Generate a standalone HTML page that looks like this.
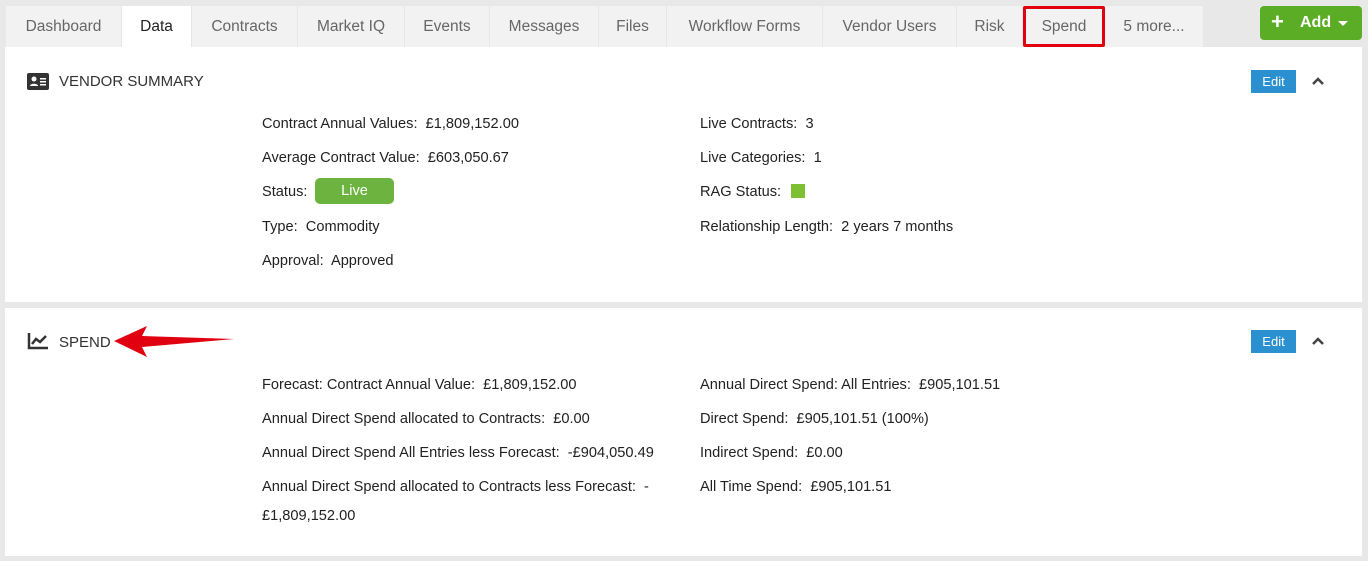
<!DOCTYPE html>
<html><head><style>
*{box-sizing:border-box;margin:0;padding:0}
body{width:1368px;height:561px;background:#e8e8e8;font-family:"Liberation Sans",sans-serif;font-size:14.6px;color:#222;position:relative;overflow:hidden}
.tab{position:absolute;top:6px;height:41px;background:#f2f2f2;color:#666;font-size:15.5px;line-height:41px;text-align:center;border-right:1px solid #e6e6e6}
.tab.active{background:#fff;color:#222}
.panel{position:absolute;left:5px;width:1357px;background:#fff}
.t{position:absolute;white-space:nowrap}
.h{position:absolute;font-size:15px;color:#333;white-space:nowrap}
.edit{position:absolute;width:45px;height:23px;background:#2b90d0;color:#fff;font-size:13px;line-height:23px;text-align:center}
.chev{position:absolute}
</style></head><body>
<div class="tab" style="left:6px;width:116px">Dashboard</div>
<div class="tab active" style="left:122px;width:70px">Data</div>
<div class="tab" style="left:192px;width:106px">Contracts</div>
<div class="tab" style="left:298px;width:107px">Market IQ</div>
<div class="tab" style="left:405px;width:85px">Events</div>
<div class="tab" style="left:490px;width:109px">Messages</div>
<div class="tab" style="left:599px;width:68px">Files</div>
<div class="tab" style="left:667px;width:156px">Workflow Forms</div>
<div class="tab" style="left:823px;width:134px">Vendor Users</div>
<div class="tab" style="left:957px;width:66px">Risk</div>
<div class="tab" style="left:1023px;width:82px;border:3px solid #e00010;border-radius:2px;line-height:35px">Spend</div>
<div class="tab" style="left:1105px;width:99px">5 more...</div>
<div style="position:absolute;left:1260px;top:6px;width:102px;height:34px;background:#5cad26;border-radius:4px;color:#fff;font-size:16px;font-weight:bold;line-height:34px">
<span style="position:absolute;left:11px;font-size:22px;top:-1px">+</span><span style="position:absolute;left:40px">Add</span>
<span style="position:absolute;left:78px;top:15px;border-left:5px solid transparent;border-right:5px solid transparent;border-top:5px solid #fff"></span></div>

<div class="panel" style="top:47px;height:255px">
<svg style="position:absolute;left:22px;top:26px" width="22" height="17" viewBox="0 0 22 17"><rect width="22" height="17" rx="2" fill="#333"/><circle cx="7" cy="6" r="2.5" fill="#fff"/><path d="M3 13c0-3 8-3 8 0z" fill="#fff"/><rect x="13" y="5" width="6" height="1.5" fill="#fff"/><rect x="13" y="8" width="6" height="1.5" fill="#fff"/><rect x="13" y="11" width="6" height="1.5" fill="#fff"/></svg>
<div class="h" style="left:54px;top:26px">VENDOR SUMMARY</div>
<div class="edit" style="top:23px;left:1246px">Edit</div>
<svg class="chev" style="top:29px;left:1306px" width="14" height="10"><path d="M2 8l5-5 5 5" stroke="#444" stroke-width="2.5" fill="none"/></svg>
<div class="t" style="left:257px;top:69px">Contract Annual Values:&nbsp; £1,809,152.00</div>
<div class="t" style="left:257px;top:103px">Average Contract Value:&nbsp; £603,050.67</div>
<div class="t" style="left:257px;top:137px">Status:</div>
<div style="position:absolute;left:310px;top:131px;width:79px;height:26px;background:#6db33f;border-radius:5px;color:#fff;text-align:center;line-height:26px">Live</div>
<div class="t" style="left:257px;top:172px">Type:&nbsp; Commodity</div>
<div class="t" style="left:257px;top:206px">Approval:&nbsp; Approved</div>
<div class="t" style="left:695px;top:69px">Live Contracts:&nbsp; 3</div>
<div class="t" style="left:695px;top:103px">Live Categories:&nbsp; 1</div>
<div class="t" style="left:695px;top:137px">RAG Status:</div>
<div style="position:absolute;left:786px;top:137px;width:14px;height:14px;background:#7fbf32"></div>
<div class="t" style="left:695px;top:172px">Relationship Length:&nbsp; 2 years 7 months</div>
</div>

<div class="panel" style="top:308px;height:248px">
<svg style="position:absolute;left:22px;top:24px" width="22" height="18" viewBox="0 0 22 18"><path d="M2 1v15h19" stroke="#333" stroke-width="2.5" fill="none"/><path d="M5 12l4-5 4 3 6-6" stroke="#333" stroke-width="2.5" fill="none"/></svg>
<div class="h" style="left:54px;top:26px">SPEND</div>
<svg style="position:absolute;left:107px;top:15px" width="125" height="36"><path d="M2 18L35 3l-5 10L122 16 30 24l5 10z" fill="#e00010"/></svg>
<div class="edit" style="top:22px;left:1246px">Edit</div>
<svg class="chev" style="top:28px;left:1306px" width="14" height="10"><path d="M2 8l5-5 5 5" stroke="#444" stroke-width="2.5" fill="none"/></svg>
<div class="t" style="left:257px;top:69px">Forecast: Contract Annual Value:&nbsp; £1,809,152.00</div>
<div class="t" style="left:257px;top:103px">Annual Direct Spend allocated to Contracts:&nbsp; £0.00</div>
<div class="t" style="left:257px;top:137px">Annual Direct Spend All Entries less Forecast:&nbsp; -£904,050.49</div>
<div class="t" style="left:257px;top:171px">Annual Direct Spend allocated to Contracts less Forecast:&nbsp; -</div>
<div class="t" style="left:257px;top:200px">£1,809,152.00</div>
<div class="t" style="left:695px;top:69px">Annual Direct Spend: All Entries:&nbsp; £905,101.51</div>
<div class="t" style="left:695px;top:103px">Direct Spend:&nbsp; £905,101.51 (100%)</div>
<div class="t" style="left:695px;top:137px">Indirect Spend:&nbsp; £0.00</div>
<div class="t" style="left:695px;top:171px">All Time Spend:&nbsp; £905,101.51</div>
</div>
</body></html>
